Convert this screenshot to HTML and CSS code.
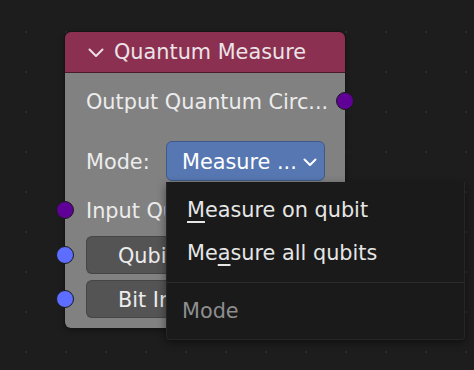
FILE: index.html
```html
<!DOCTYPE html>
<html>
<head>
<meta charset="utf-8">
<link rel="stylesheet" href="styles.css">
</head>
<body>
<div class="canvas">
  <div class="node">
    <div class="node-header">
      <svg class="chev" width="16" height="10" viewBox="0 0 16 10"><polyline points="1.5,1.5 8,8 14.5,1.5" fill="none" stroke="#eadfe4" stroke-width="2" stroke-linecap="round" stroke-linejoin="round"/></svg>
      <span class="title">Quantum Measure</span>
    </div>
    <div class="node-body">
      <div class="row row-output">
        <span class="label">Output Quantum Circ...</span>
        <span class="socket socket-out purple"></span>
      </div>
      <div class="row row-mode">
        <span class="label mode-label">Mode:</span>
        <div class="dropdown">
          <span class="dd-text">Measure ...</span>
          <svg class="dd-chev" width="14" height="9" viewBox="0 0 14 9"><polyline points="1.5,1.5 7,7 12.5,1.5" fill="none" stroke="#ffffff" stroke-width="2" stroke-linecap="round" stroke-linejoin="round"/></svg>
        </div>
      </div>
      <div class="row row-input">
        <span class="socket socket-in purple"></span>
        <span class="label clip">Input Quantum</span>
      </div>
      <div class="row row-field">
        <span class="socket socket-in blue"></span>
        <div class="field"><span class="field-text">Qubit Index</span></div>
      </div>
      <div class="row row-field">
        <span class="socket socket-in blue"></span>
        <div class="field"><span class="field-text">Bit Index</span></div>
      </div>
    </div>
  </div>

  <div class="menu">
    <div class="menu-item"><span class="ul">M</span>easure on qubit</div>
    <div class="menu-item">Me<span class="ul">a</span>sure all qubits</div>
    <div class="menu-sep"></div>
    <div class="menu-title">Mode</div>
  </div>
</div>
</body>
</html>
```

FILE: styles.css
```css
html, body {
  margin: 0;
  padding: 0;
}
body {
  width: 474px;
  height: 370px;
  overflow: hidden;
  background-color: #1d1d1d;
  font-family: "DejaVu Sans", "Liberation Sans", sans-serif;
  font-size: 20.8px;
}
.canvas {
  position: relative;
  width: 474px;
  height: 370px;
  background-image: radial-gradient(circle, #2b2b2b 0.8px, transparent 1.6px);
  background-size: 40px 40px;
  background-position: 6px 12px;
}
.node {
  position: absolute;
  left: 65px;
  top: 32px;
  width: 280px;
  height: 296px;
  border-radius: 6px;
  box-shadow: 0 0 0 1px #151515, 0 2px 6px rgba(0,0,0,0.4);
  display: flex;
  flex-direction: column;
}
.node-header {
  height: 40px;
  background: #8b3050;
  border-radius: 6px 6px 0 0;
  border-bottom: 1px solid #4a1a2b;
  display: flex;
  align-items: center;
  padding-left: 23px;
  color: #ece3e7;
}
.chev {
  margin-right: 10px;
  margin-top: 2px;
}
.title {
  line-height: 1;
  padding-top: 1px;
}
.node-body {
  flex: 1;
  background: #818181;
  border-radius: 0 0 6px 6px;
  padding: 6px 0 8px 0;
  display: flex;
  flex-direction: column;
  color: #ececec;
}
.row {
  position: relative;
  display: flex;
  align-items: center;
  padding-left: 21px;
}
.row-output {
  height: 44px;
}
.row-mode {
  height: 40px;
  margin-top: 18px;
}
.row-input {
  height: 40px;
  margin-top: 9px;
}
.row-field {
  height: 38px;
  margin-top: 6px;
}
.label {
  white-space: nowrap;
  padding-top: 2px;
}
.clip {
  max-width: 79px;
  overflow: hidden;
}
.mode-label {
  width: 80px;
}
.dropdown {
  width: 159px;
  height: 40px;
  box-sizing: border-box;
  background: #5677b1;
  border: 1px solid #3f5a8a;
  border-radius: 6px;
  display: flex;
  align-items: center;
  justify-content: space-between;
  padding: 2px 7px 0 15px;
  color: #ffffff;
}
.dd-chev {
  margin-top: 0px;
}
.field {
  width: 81px;
  height: 38px;
  box-sizing: border-box;
  background: #545454;
  border: 1px solid #454545;
  border-right: none;
  border-radius: 6px 0 0 6px;
  display: flex;
  align-items: center;
  padding: 2px 0 0 31px;
  color: #ececec;
  white-space: nowrap;
  overflow: hidden;
}
.field-text {
  overflow: hidden;
}
.socket {
  position: absolute;
  border-radius: 50%;
  border: 1px solid #1a1a1a;
  box-sizing: border-box;
  top: 50%;
  width: 18px;
  height: 18px;
  margin-top: -9px;
}
.socket-out {
  right: -9px;
}
.socket-in {
  left: -9px;
}
.purple {
  background: #5f0096;
}
.blue {
  background: #5d6dff;
}
.menu {
  position: absolute;
  left: 166px;
  top: 182px;
  width: 299px;
  height: 158px;
  box-sizing: border-box;
  background: #1a1a1a;
  border: 1px solid #262626;
  border-top: none;
  border-radius: 0 0 4px 4px;
  box-shadow: 0 3px 8px rgba(0,0,0,0.45);
  padding-top: 6px;
  color: #e6e6e6;
}
.menu-item {
  height: 43px;
  display: flex;
  align-items: center;
  padding-left: 20px;
  white-space: nowrap;
}
.ul {
  text-decoration: underline;
  text-decoration-thickness: 2px;
  text-underline-offset: 4px;
}
.menu-sep {
  height: 1px;
  background: #2c2c2c;
  margin-top: 8px;
}
.menu-title {
  height: 52px;
  display: flex;
  align-items: center;
  padding-left: 15px;
  padding-top: 3px;
  box-sizing: border-box;
  color: #8e8e8e;
}
```
